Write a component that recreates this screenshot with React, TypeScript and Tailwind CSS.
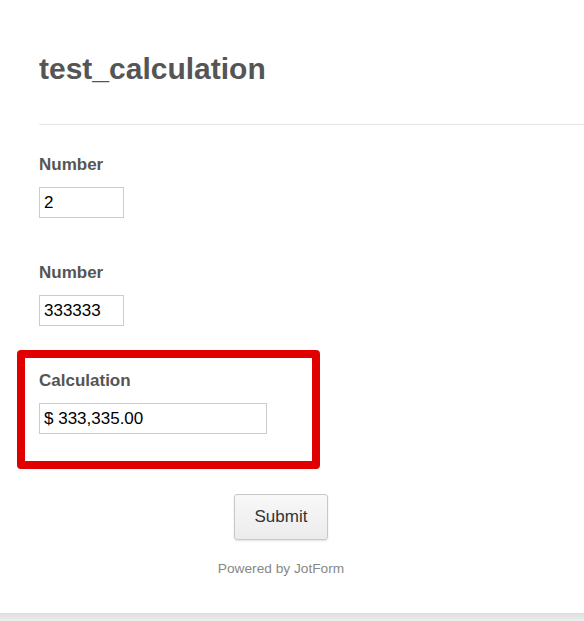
const fields = [
  { label: "Number", value: "2", width: "w-[85px]" },
  { label: "Number", value: "333333", width: "w-[85px]" },
];

function Field({ label, value, width }: { label: string; value: string; width: string }) {
  return (
    <div className="pt-[30px] pb-[15px]">
      <label className="block text-[17px] leading-5 font-bold text-[#555]">{label}</label>
      <input
        readOnly
        value={value}
        className={`mt-3 block h-[31px] ${width} border border-[#ccc] bg-white px-1 text-[17px] text-black outline-none`}
      />
    </div>
  );
}

export default function App() {
  return (
    <div
      className="flex h-[621px] w-full flex-col overflow-hidden bg-white"
      style={{ fontFamily: '"Liberation Sans", Arial, sans-serif' }}
    >
      <div className="flex-1">
        <div className="pl-[39px] pt-[51px]">
          <h1 className="text-[30px] leading-9 font-bold text-[#555]">test_calculation</h1>
          <div className="mt-[37px] h-px bg-[#e6e6e6]" />
        </div>

        <div className="pl-[39px]">
          {fields.map((f, i) => (
            <Field key={i} {...f} />
          ))}

          <div className="relative">
            <div className="pointer-events-none absolute top-[9px] -left-[22px] h-[119px] w-[303px] rounded-[4px] border-[8px] border-[#e10000]" />
            <Field label="Calculation" value="$ 333,335.00" width="w-[228px]" />
          </div>
        </div>

        <div className="flex w-[562px] flex-col items-center pt-[45px]">
          <button className="h-[46px] w-[94px] rounded-[3px] border border-[#c8c8c8] bg-gradient-to-b from-[#f8f8f8] to-[#ececec] text-[17px] text-[#333] shadow-[0_1px_2px_rgba(0,0,0,0.12)]">
            Submit
          </button>
          <p className="mt-[21px] text-[13.7px] leading-4 text-[#888]">Powered by JotForm</p>
        </div>
      </div>
      <div className="h-[8px] bg-gradient-to-b from-[#dedede] to-[#ededed]" />
    </div>
  );
}
